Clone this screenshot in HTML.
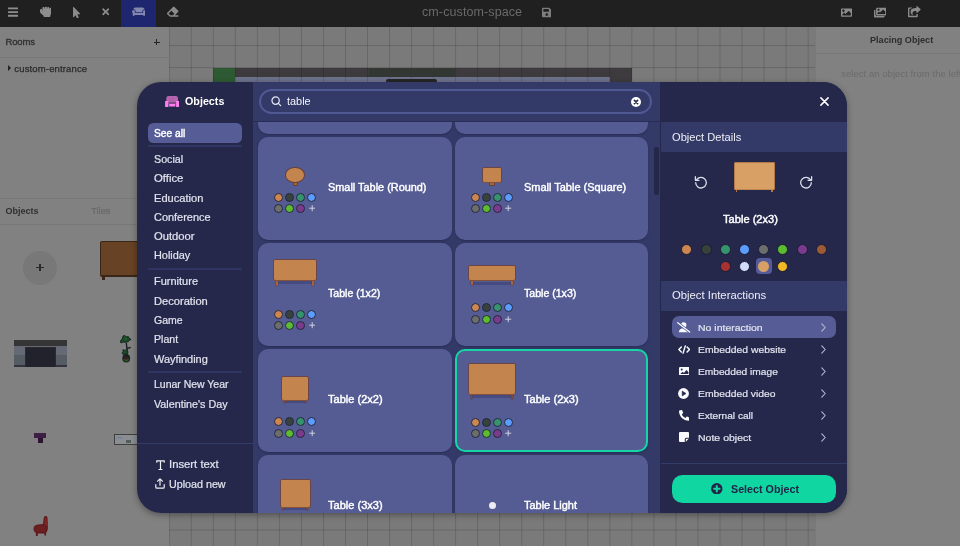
<!DOCTYPE html>
<html>
<head>
<meta charset="utf-8">
<title>Mapmaker</title>
<style>
*{box-sizing:border-box;margin:0;padding:0}
html,body{width:960px;height:546px;overflow:hidden;background:#808080;font-family:"Liberation Sans",sans-serif;}
.abs{position:absolute}
#stage{position:absolute;left:0;top:0;width:960px;height:546px;overflow:hidden;background:#7a7a7a;will-change:transform}
/* grid */
#grid{position:absolute;left:169px;top:27px;width:646px;height:519px}
#topbar{position:absolute;left:0;top:0;width:960px;height:27px;background:#202020}
#leftp{position:absolute;left:0;top:27px;width:169px;height:519px;background:#818181}
#rightp{position:absolute;left:815.5px;top:27px;width:144.5px;height:519px;background:#818181}
.t{position:absolute;white-space:nowrap;line-height:1}
.hl{position:absolute;height:1px;background:#777}
/* modal */
#modal{position:absolute;left:137px;top:82px;width:710px;height:431px;border-radius:24px;background:#25284b;overflow:hidden;}
#mshadow{position:absolute;left:137px;top:82px;width:710px;height:431px;border-radius:24px;box-shadow:0 2px 6px rgba(0,0,0,.35)}
#center{position:absolute;left:115.600px;top:0;width:407px;height:431px;background:#333a68}
.card{position:absolute;width:194px;height:103px;border-radius:10px;background:#555c93;box-shadow:0 1px 1.5px rgba(30,34,70,.5)}
.card.sel{border:2px solid #14d6a6}
.dot{position:absolute;width:9px;height:9px;border-radius:50%;border:.9px solid #25283f}
.plus{position:absolute;color:#e6e7f2;font-size:11px;line-height:9px;width:9px;text-align:center}
.lbl{position:absolute;color:#fff;font-weight:normal;-webkit-text-stroke:.4px #fff;font-size:10.300px;white-space:nowrap;line-height:1}
.mi{position:absolute;left:16.5px;color:#e2e3ee;-webkit-text-stroke:.2px #e2e3ee;font-size:10.200px;white-space:nowrap;line-height:1}
.sdiv{position:absolute;left:11px;width:94px;height:2px;background:#2f3663;border-radius:1px}
.band{position:absolute;left:1.300px;width:187px;height:30px;background:#333a68}
.ri{position:absolute;left:38.3px;color:#e2e3ee;-webkit-text-stroke:.2px #e2e3ee;font-size:9.700px;white-space:nowrap;line-height:1}
</style>
</head>
<body>
<div id="stage">
 <div id="map">
  <div class="abs" style="left:213px;top:68px;width:22px;height:20px;background:#2d5a32"></div>
  <div class="abs" style="left:235px;top:68px;width:397px;height:8.500px;background:#3d3b3e"></div>
  <div class="abs" style="left:235px;top:76.500px;width:375px;height:10px;background:#6c718a"></div>
  <div class="abs" style="left:610px;top:68px;width:22px;height:20px;background:#3d3b3e"></div>
 </div>
 <svg id="grid" width="646" height="519" viewBox="0 0 646 519"><defs><pattern id="gp" width="22.030" height="22.020" patternUnits="userSpaceOnUse" x="-.25" y="18.050"><rect x="0" y="0" width="1" height="22.020" fill="#000" fill-opacity=".15"/><rect x="0" y="0" width="22.030" height="1" fill="#000" fill-opacity=".15"/></pattern></defs><rect width="646" height="519" fill="url(#gp)"/></svg>
 <div id="map2">
  <div class="abs" style="left:368.500px;top:68px;width:86.500px;height:8.500px;background:#333734"></div>
  <div class="abs" style="left:386px;top:78.800px;width:51px;height:8px;background:#252525;border-radius:2px 2px 0 0"></div>
 </div>
 <div id="topbar">
  <svg class="abs" style="left:8.100px;top:6.800px;width:10.100px;height:10.100px" viewBox="0 0 448 448" fill="#8d8d8d"><rect x="0" y="20" width="448" height="80" rx="16"/><rect x="0" y="184" width="448" height="80" rx="16"/><rect x="0" y="348" width="448" height="80" rx="16"/></svg>
  <svg class="abs" style="left:39.500px;top:6px;width:11.700px;height:11.700px" viewBox="0 0 512 512" fill="#8d8d8d"><path d="M464.800 80c-26.900-.400-48.800 21.200-48.800 48h-8V96.800c0-26.300-20.900-48.300-47.200-48.800-26.900-.400-48.800 21.200-48.800 48v32h-8V80.800c0-26.300-20.900-48.300-47.200-48.800-26.900-.400-48.800 21.200-48.800 48v48h-8V96.800c0-26.300-20.900-48.300-47.200-48.800-26.900-.400-48.800 21.200-48.800 48v136l-8-7.100v-48.100c0-26.300-20.900-48.300-47.200-48.800C21.900 127.600 0 149.200 0 176v66.400c0 27.400 11.700 53.500 32.200 71.800l111.700 99.300c10.200 9.100 16.100 22.200 16.100 35.900v6.700c0 13.300 10.700 24 24 24h240c13.300 0 24-10.700 24-24v-2.900c0-12.800 2.600-25.500 7.500-37.300l49-116.300c5-11.800 7.500-24.500 7.500-37.300V128.800c0-26.300-20.900-48.400-47.200-48.800z"/></svg>
  <svg class="abs" style="left:72.7px;top:6.5px;width:7.2px;height:11.4px" viewBox="0 0 320 512" fill="#8b8b8b"><path d="M302.189 329.126H196.105l55.831 135.993c3.889 9.428-.555 19.999-9.444 23.999l-49.165 21.427c-9.165 4-19.443-.571-23.332-9.714l-53.053-129.136-86.664 89.138C18.729 472.710 0 463.554 0 447.977V18.299C0 1.899 19.921-6.096 30.277 5.443l284.412 292.542c11.472 11.179 3.007 31.141-12.500 31.141z"/></svg>
  <svg class="abs" style="left:101.800px;top:8.400px;width:7.500px;height:7.500px" viewBox="0 68 352 376" fill="#8b8b8b"><path d="M242.720 256l100.070-100.070c12.280-12.280 12.280-32.190 0-44.480l-22.240-22.240c-12.280-12.280-32.190-12.280-44.480 0L176 189.280 75.930 89.210c-12.280-12.280-32.190-12.280-44.480 0L9.210 111.450c-12.280 12.280-12.280 32.190 0 44.480L109.280 256 9.210 356.070c-12.280 12.280-12.280 32.190 0 44.480l22.240 22.240c12.280 12.280 32.200 12.280 44.480 0L176 322.720l100.070 100.070c12.280 12.280 32.200 12.280 44.480 0l22.240-22.240c12.280-12.280 12.280-32.190 0-44.480L242.720 256z"/></svg>
  <div class="abs" style="left:120.800px;top:0;width:35.700px;height:27px;background:#1f2670"></div>
  <svg class="abs" style="left:131.500px;top:6.200px;width:13.900px;height:11.100px" viewBox="0 0 640 512" fill="#8287ad"><path d="M160 224v64h320v-64c0-35.300 28.700-64 64-64h32c0-53-43-96-96-96H160c-53 0-96 43-96 96h32c35.300 0 64 28.700 64 64zm416-32h-32c-17.700 0-32 14.300-32 32v96H128v-96c0-17.700-14.300-32-32-32H64c-35.300 0-64 28.700-64 64 0 23.600 13 44 32 55.100V432c0 8.800 7.200 16 16 16h64c8.800 0 16-7.200 16-16v-16h384v16c0 8.800 7.200 16 16 16h64c8.800 0 16-7.200 16-16V311.100c19-11.100 32-31.500 32-55.100 0-35.300-28.700-64-64-64z"/></svg>
  <svg class="abs" style="left:167.200px;top:6.100px;width:11.400px;height:11.400px" viewBox="0 0 512 512" fill="#8b8b8b"><path d="M497.941 273.941c18.745-18.745 18.745-49.137 0-67.882l-160-160c-18.745-18.745-49.136-18.746-67.883 0l-256 256c-18.745 18.745-18.745 49.137 0 67.882l96 96A48.004 48.004 0 0 0 144 480h356c6.627 0 12-5.373 12-12v-40c0-6.627-5.373-12-12-12H355.883l142.058-142.059zm-302.627-62.627l137.373 137.373L265.373 416H150.628l-80-80 124.686-124.686z"/></svg>
  <div class="t" id="ttl" style="left:422px;top:5.500px;font-size:12.500px;color:#6a6a6a;letter-spacing:.1px">cm-custom-space</div>
  <svg class="abs" style="left:541.600px;top:6.800px;width:9.600px;height:11px" viewBox="0 0 448 512" fill="#7e7e7e"><path d="M433.941 129.941l-83.882-83.882A48 48 0 0 0 316.118 32H48C21.490 32 0 53.490 0 80v352c0 26.510 21.490 48 48 48h352c26.510 0 48-21.490 48-48V163.882a48 48 0 0 0-14.059-33.941zM224 416c-35.346 0-64-28.654-64-64 0-35.346 28.654-64 64-64s64 28.654 64 64c0 35.346-28.654 64-64 64zm96-304.520V212c0 6.627-5.373 12-12 12H76c-6.627 0-12-5.373-12-12V108c0-6.627 5.373-12 12-12h228.520c3.183 0 6.235 1.264 8.485 3.515l3.480 3.480A11.996 11.996 0 0 1 320 111.480z"/></svg>
  <svg class="abs" style="left:841px;top:6.800px;width:11.200px;height:11.200px" viewBox="0 0 512 512" fill="#8b8b8b"><path d="M464 448H48c-26.510 0-48-21.490-48-48V112c0-26.510 21.490-48 48-48h416c26.510 0 48 21.490 48 48v288c0 26.510-21.490 48-48 48zM112 120c-30.928 0-56 25.072-56 56s25.072 56 56 56 56-25.072 56-56-25.072-56-56-56zM64 384h384V272l-87.515-87.515c-4.686-4.686-12.284-4.686-16.971 0L208 320l-55.515-55.515c-4.686-4.686-12.284-4.686-16.971 0L64 336v48z"/></svg>
  <svg class="abs" style="left:873.800px;top:6.600px;width:12.600px;height:11.200px" viewBox="0 0 576 512" fill="#8b8b8b"><path d="M480 416v16c0 26.510-21.490 48-48 48H48c-26.510 0-48-21.490-48-48V176c0-26.510 21.490-48 48-48h16v208c0 44.112 35.888 80 80 80h336zm96-80V80c0-26.510-21.490-48-48-48H144c-26.510 0-48 21.490-48 48v256c0 26.510 21.490 48 48 48h384c26.510 0 48-21.490 48-48zM256 128c0 26.510-21.490 48-48 48s-48-21.490-48-48 21.490-48 48-48 48 21.490 48 48zm-96 144l55.515-55.515c4.686-4.686 12.284-4.686 16.971 0L272 256l135.515-135.515c4.686-4.686 12.284-4.686 16.971 0L512 208v112H160v-48z"/></svg>
  <svg class="abs" style="left:908.400px;top:6.400px;width:12.600px;height:11.200px" viewBox="0 0 576 512" fill="#8b8b8b"><path d="M568.482 177.448L424.479 313.433C409.300 327.768 384 317.140 384 295.985v-71.963c-144.575.970-205.566 35.113-164.775 171.353 4.483 14.973-12.846 26.567-25.006 17.330C155.252 383.105 120 326.488 120 269.339c0-143.937 117.599-172.500 264-173.312V24.012c0-21.174 25.317-31.768 40.479-17.448l144.003 135.988c10.020 9.463 10.028 25.425 0 34.896zM384 379.128V448H64V128h50.916a11.990 11.990 0 0 0 8.648-3.693c14.953-15.568 32.237-27.890 51.014-37.676C185.708 80.830 181.584 64 169.033 64H48C21.490 64 0 85.490 0 112v352c0 26.510 21.490 48 48 48h352c26.510 0 48-21.490 48-48v-88.806c0-8.288-8.197-14.066-16.011-11.302a71.830 71.830 0 0 1-34.189 3.377c-7.270-1.046-13.800 4.514-13.800 11.859z"/></svg>
 </div>
 <div id="leftp">
  <div class="t" id="rooms" style="left:5.500px;top:10px;font-size:9.500px;color:#2f2f2f;-webkit-text-stroke:.3px #2f2f2f;letter-spacing:-.15px">Rooms</div>
  <div class="abs" style="left:153.600px;top:14.500px;width:6.200px;height:1.300px;background:#242424"></div><div class="abs" style="left:156.050px;top:12.050px;width:1.300px;height:6.200px;background:#242424"></div>
  <div class="hl" style="left:0;top:30px;width:169px"></div>
  <div class="abs" style="left:8.200px;top:38.100px;width:0;height:0;border-left:3.800px solid #222;border-top:3.200px solid transparent;border-bottom:3.200px solid transparent"></div>
  <div class="t" id="cent" style="left:14.300px;top:36.800px;font-size:9.500px;color:#2b2b2b;-webkit-text-stroke:.25px #2b2b2b;letter-spacing:.15px">custom-entrance</div>
  <div class="hl" style="left:0;top:171px;width:169px"></div>
  <div class="t" id="lobj" style="left:5.600px;top:180px;font-size:9px;font-weight:bold;color:#2f2f2f;letter-spacing:0">Objects</div>
  <div class="t" id="ltil" style="left:91.300px;top:180px;font-size:9.200px;color:#686868;-webkit-text-stroke:.2px #686868">Tiles</div>
  <div class="hl" style="left:0;top:197px;width:169px"></div>
  <div class="abs" style="left:23px;top:223.500px;width:34px;height:34px;border-radius:50%;background:#787878"></div>
  <div class="abs" style="left:36.400px;top:240.100px;width:7.200px;height:1.200px;background:#2a2a2a"></div><div class="abs" style="left:39.400px;top:237.100px;width:1.200px;height:7.200px;background:#2a2a2a"></div>
  <!-- brown table -->
  <div class="abs" style="left:102px;top:246px;width:2.500px;height:7px;background:#3d2414"></div>
  <div class="abs" style="left:99.500px;top:214px;width:45px;height:35.500px;background:#674225;border:1px solid #3a2616;border-radius:2px;border-bottom-width:2px"></div>
  <!-- door -->
  <div class="abs" style="left:13.700px;top:312.800px;width:53.300px;height:27px;background:#656976"></div>
  <div class="abs" style="left:13.700px;top:312.800px;width:53.300px;height:6px;background:#353535"></div>
  <div class="abs" style="left:13.700px;top:327.500px;width:53.300px;height:10px;background:#565c63"></div>
  <div class="abs" style="left:13.700px;top:337.800px;width:53.300px;height:2px;background:#35343d"></div>
  <div class="abs" style="left:25px;top:319.500px;width:30.600px;height:20.300px;background:#22222c;border:1.500px solid #2b2b2b;border-bottom:none"></div>
  <!-- plant -->
  <svg class="abs" style="left:120px;top:307.500px;width:12px;height:28px" viewBox="0 0 12 28"><ellipse cx="6.200" cy="23.200" rx="3.900" ry="4.300" fill="#1a2420"/><ellipse cx="6.200" cy="24.600" rx="2.600" ry="1.900" fill="#245426"/><ellipse cx="6.200" cy="22.900" rx="2.400" ry="1.700" fill="#3a1c26"/><path d="M6.300 8L7.100 14.500 6.400 22" stroke="#1a1e22" stroke-width="1.400" fill="none"/><path d="M6.600 12.600l4.700-.9-1.100 1.700-3.600.7z" fill="#1b2922"/><path d="M2.900 14.600l2 .9 1.600-1.100 1.600 2.600-.9 2.100-4.200.3-1-1.500 1.100-1.500z" fill="#1a4a26" stroke="#14201a" stroke-width=".8"/><path d="M.7 5.400l1.600-1.500.9-3 1.600-.5 1.500 1.500 2-.3 1.200 2 1.600.8-1.900.9-1 1.500-3 .5-2-.3-2 .8-1.500-1.200z" fill="#1a4c27" stroke="#131d18" stroke-width=".9"/><path d="M3.500 3.200l2-.8 2 1.400-1.800 1.600z" fill="#1f5c2c"/></svg>
  <!-- purple -->
  <div class="abs" style="left:34.200px;top:406px;width:12px;height:5px;background:#3d1f45"></div>
  <div class="abs" style="left:37.600px;top:410.500px;width:5.200px;height:5px;background:#2d1433"></div>
  <!-- whiteboard -->
  <div class="abs" style="left:113.600px;top:407.300px;width:30px;height:11px;background:#8a8e92;border:1px solid #3f3f3f"></div>
  <div class="abs" style="left:116px;top:410px;width:7px;height:5px;border-top:1.500px solid #6c78a0;border-radius:50%"></div>
  <div class="abs" style="left:126px;top:412.500px;width:5px;height:3px;background:#555d5c"></div>
  <!-- chair -->
  <svg class="abs" style="left:32.500px;top:488px;width:16px;height:22px" viewBox="0 0 16 22"><path d="M10.700 3c.500-2.600 3.600-2.600 3.800 0l.400 9.500c0 2.500-.800 4.500-1.800 5.200v2.800h-1.700v-2H4.800v2.500H2.900v-3C1 17 .4 14.800.6 13c.300-2.200 2.300-3.200 4.800-3.400l4.600-.5z" fill="#5e1a1c"/><path d="M11.500 3.200c.300-1.500 2.100-1.500 2.300 0l.300 9c-.700-1.600-2.100-2.200-3-2.300z" fill="#7a2426"/><path d="M1.500 13c.400-1.600 2-2.300 4-2.400l4.600-.4c1.600.3 2.700 1.400 3 3 .200 1.700-.300 3-1 3.700H3.200c-1-.500-2-2-1.700-3.900z" fill="#6c1f21"/></svg>
 </div>
 <div id="rightp">
  <div class="t" id="plo" style="left:54.500px;top:9px;font-size:9.100px;font-weight:bold;color:#2d2d2d;letter-spacing:0">Placing Object</div>
  <div class="hl" style="left:0;top:25.500px;width:144px"></div>
  <div class="t" id="sel" style="left:25.600px;top:42.200px;font-size:9.500px;color:#6b6b6b;letter-spacing:.05px">select an object from the left</div>
 </div>
 <div id="mshadow"></div>
 <div id="modal">
<div id="side">
<svg class="abs" style="left:27.7px;top:13.7px;width:14.4px;height:11.4px" viewBox="0 0 14.4 11.4"><rect x="1.3" y=".1" width="11.7" height="6.5" rx="2.200" fill="#b564b0"/><g fill="#8d4a8c"><circle cx="5.100" cy="2.500" r=".45"/><circle cx="8" cy="2.500" r=".45"/><circle cx="5.100" cy="4.300" r=".45"/><circle cx="8" cy="4.300" r=".45"/></g><rect x="3.300" y="6.300" width="7.900" height="2.200" fill="#8e4b8c"/><rect x=".1" y="5" width="3.300" height="6.300" rx=".5" fill="#ff7eee"/><rect x="11.100" y="5" width="3.200" height="6.300" rx=".5" fill="#ff7eee"/><rect x="4.200" y="8.100" width="6.200" height="2.500" rx=".3" fill="#ff7eee"/></svg>
<div class="t" id="sobj" style="left:47.8px;top:15.300px;font-size:10.100px;font-weight:bold;color:#fff;transform:scaleX(1.0640);transform-origin:left center;">Objects</div>
<div class="abs" style="left:11px;top:41.200px;width:94px;height:19.400px;border-radius:5.500px;background:#555c96"></div>
<div class="t" id="seeall" style="left:16.6px;top:46.900px;font-size:10.200px;-webkit-text-stroke:.4px #fff;color:#fff;transform:scaleX(1.0046);transform-origin:left center;">See all</div>
<div class="sdiv" style="top:63.1px"></div>
<div class="sdiv" style="top:186.0px"></div>
<div class="sdiv" style="top:288.8px"></div>
<div class="abs" style="left:0;top:360.5px;width:116px;height:1.5px;background:#333b6b"></div>
<div class="mi" id="mi0" style="top:72.9px;transform:scaleX(1.0523);transform-origin:left center;">Social</div>
<div class="mi" id="mi1" style="top:92.3px;transform:scaleX(1.1121);transform-origin:left center;">Office</div>
<div class="mi" id="mi2" style="top:111.5px;transform:scaleX(1.0880);transform-origin:left center;">Education</div>
<div class="mi" id="mi3" style="top:130.8px;transform:scaleX(1.0727);transform-origin:left center;">Conference</div>
<div class="mi" id="mi4" style="top:150.1px;transform:scaleX(1.1002);transform-origin:left center;">Outdoor</div>
<div class="mi" id="mi5" style="top:169.4px;transform:scaleX(1.0681);transform-origin:left center;">Holiday</div>
<div class="mi" id="mi6" style="top:195.2px;transform:scaleX(1.0793);transform-origin:left center;">Furniture</div>
<div class="mi" id="mi7" style="top:214.5px;transform:scaleX(1.0917);transform-origin:left center;">Decoration</div>
<div class="mi" id="mi8" style="top:233.9px;transform:scaleX(1.0306);transform-origin:left center;">Game</div>
<div class="mi" id="mi9" style="top:253.2px;transform:scaleX(1.0373);transform-origin:left center;">Plant</div>
<div class="mi" id="mi10" style="top:272.5px;transform:scaleX(1.0753);transform-origin:left center;">Wayfinding</div>
<div class="mi" id="mi11" style="top:298.4px;transform:scaleX(1.0276);transform-origin:left center;">Lunar New Year</div>
<div class="mi" id="mi12" style="top:317.8px;transform:scaleX(1.0557);transform-origin:left center;">Valentine's Day</div>
<svg class="abs" style="left:19px;top:377.5px;width:9px;height:10.5px" viewBox="0 0 9 10.5" fill="none" stroke="#f0f0f7" stroke-width="1.2" stroke-linecap="round"><path d="M.8 2.2V.8h7.4v1.400M4.5.8v8.900M3 9.700h3"/></svg>
<div class="mi" id="mins" style="left:31.700px;top:378.100px;transform:scaleX(1.1088);transform-origin:left center;">Insert text</div>
<svg class="abs" style="left:17.700px;top:396px;width:10px;height:11px" viewBox="0 0 10 11" fill="none" stroke="#f0f0f7" stroke-width="1.2" stroke-linecap="round" stroke-linejoin="round"><path d="M5 7.200V1M2.600 3.200L5 .8l2.400 2.400M.8 6.500v2.700c0 .6.400 1 1 1h6.400c.6 0 1-.4 1-1V6.500"/></svg>
<div class="mi" id="mupl" style="left:31.700px;top:397.600px;transform:scaleX(1.0518);transform-origin:left center;">Upload new</div>
</div>
<div id="center">
<div class="card" style="left:5.4px;top:-51.0px;width:194.3px"></div>
<div class="card" style="left:202.2px;top:-51.0px;width:193.4px"></div>
<div class="card" style="left:5.4px;top:55.1px;width:194.3px"></div>
<div class="lbl" id="c10" style="left:75.3px;top:101.2px;transform:scaleX(1.0579);transform-origin:left center;">Small Table (Round)</div>
<div class="card" style="left:202.2px;top:55.1px;width:193.4px"></div>
<div class="lbl" id="c11" style="left:271.6px;top:101.2px;transform:scaleX(1.0649);transform-origin:left center;">Small Table (Square)</div>
<div class="card" style="left:5.4px;top:161.2px;width:194.3px"></div>
<div class="lbl" id="c20" style="left:75.3px;top:206.5px;transform:scaleX(1.0267);transform-origin:left center;">Table (1x2)</div>
<div class="card" style="left:202.2px;top:161.2px;width:193.4px"></div>
<div class="lbl" id="c21" style="left:271.6px;top:206.5px;transform:scaleX(1.0267);transform-origin:left center;">Table (1x3)</div>
<div class="card" style="left:5.4px;top:267.3px;width:194.3px"></div>
<div class="lbl" id="c30" style="left:75.3px;top:312.6px;transform:scaleX(1.0719);transform-origin:left center;">Table (2x2)</div>
<div class="card sel" style="left:202.2px;top:267.3px;width:193.4px"></div>
<div class="lbl" id="c31" style="left:271.6px;top:312.6px;transform:scaleX(1.0719);transform-origin:left center;">Table (2x3)</div>
<div class="card" style="left:5.4px;top:373.4px;width:194.3px"></div>
<div class="lbl" id="c40" style="left:75.3px;top:418.7px;transform:scaleX(1.0719);transform-origin:left center;">Table (3x3)</div>
<div class="card" style="left:202.2px;top:373.4px;width:193.4px"></div>
<div class="lbl" id="c41" style="left:271.6px;top:418.7px;transform:scaleX(1.0640);transform-origin:left center;">Table Light</div>
<div class="abs" style="left:40.1px;top:99.6px;width:5px;height:4px;background:#a9643a;border:.7px solid #63403c;border-radius:1px"></div><div class="abs" style="left:32.9px;top:85.0px;width:19.4px;height:15.6px;background:#c4844e;border:.8px solid #63403c;border-radius:50%"></div>
<div class="dot" style="left:21.5px;top:111.0px;background:#cc8750"></div><div class="dot" style="left:32.6px;top:111.0px;background:#37423c"></div><div class="dot" style="left:43.6px;top:111.0px;background:#35946e"></div><div class="dot" style="left:54.7px;top:111.0px;background:#5c9cfc"></div><div class="dot" style="left:21.5px;top:122.0px;background:#6c6e6c"></div><div class="dot" style="left:32.6px;top:122.0px;background:#5cbc30"></div><div class="dot" style="left:43.6px;top:122.0px;background:#7b3b8d"></div><svg class="abs" style="left:56.0px;top:123.3px;width:6.400px;height:6.400px" viewBox="0 0 6.400 6.400"><path d="M3.200 .2v6M.2 3.200h6" stroke="#d6d7e6" stroke-width=".95" fill="none"/></svg><div class="abs" style="left:236.4px;top:100.2px;width:6.5px;height:4px;background:#a9643a;border:.7px solid #63403c;border-radius:1px"></div><div class="abs" style="left:229.9px;top:85.0px;width:19.3px;height:15.8px;background:#c4844e;border:.75px solid #6a4548;border-bottom:1.100px solid #83503c;border-radius:2.400px"></div><div class="dot" style="left:218.3px;top:111.0px;background:#cc8750"></div><div class="dot" style="left:229.4px;top:111.0px;background:#37423c"></div><div class="dot" style="left:240.4px;top:111.0px;background:#35946e"></div><div class="dot" style="left:251.5px;top:111.0px;background:#5c9cfc"></div><div class="dot" style="left:218.3px;top:122.0px;background:#6c6e6c"></div><div class="dot" style="left:229.4px;top:122.0px;background:#5cbc30"></div><div class="dot" style="left:240.4px;top:122.0px;background:#7b3b8d"></div><svg class="abs" style="left:252.8px;top:123.3px;width:6.400px;height:6.400px" viewBox="0 0 6.400 6.400"><path d="M3.200 .2v6M.2 3.200h6" stroke="#d6d7e6" stroke-width=".95" fill="none"/></svg><div class="abs" style="left:24.7px;top:199.3px;width:35.8px;height:3.2px;background:rgba(45,48,100,.38)"></div><div class="abs" style="left:23.4px;top:198.3px;width:2.3px;height:6.0px;background:#a9633a;box-shadow:0 0 0 .5px rgba(90,55,60,.8);border-radius:0 0 1.200px 1.200px"></div><div class="abs" style="left:59.5px;top:198.3px;width:2.3px;height:6.0px;background:#a9633a;box-shadow:0 0 0 .5px rgba(90,55,60,.8);border-radius:0 0 1.200px 1.200px"></div><div class="abs" style="left:20.7px;top:177.0px;width:43.8px;height:22.3px;background:#c4844e;border:.75px solid #6a4548;border-bottom:1.100px solid #83503c;border-radius:2.400px"></div><div class="dot" style="left:21.5px;top:228.0px;background:#cc8750"></div><div class="dot" style="left:32.6px;top:228.0px;background:#37423c"></div><div class="dot" style="left:43.6px;top:228.0px;background:#35946e"></div><div class="dot" style="left:54.7px;top:228.0px;background:#5c9cfc"></div><div class="dot" style="left:21.5px;top:239.0px;background:#6c6e6c"></div><div class="dot" style="left:32.6px;top:239.0px;background:#5cbc30"></div><div class="dot" style="left:43.6px;top:239.0px;background:#7b3b8d"></div><svg class="abs" style="left:56.0px;top:240.3px;width:6.400px;height:6.400px" viewBox="0 0 6.400 6.400"><path d="M3.200 .2v6M.2 3.200h6" stroke="#d6d7e6" stroke-width=".95" fill="none"/></svg><div class="abs" style="left:219.5px;top:199.5px;width:39.8px;height:3.2px;background:rgba(45,48,100,.38)"></div><div class="abs" style="left:218.2px;top:198.5px;width:2.0px;height:4.2px;background:#a9633a;box-shadow:0 0 0 .5px rgba(90,55,60,.8);border-radius:0 0 1.200px 1.200px"></div><div class="abs" style="left:258.6px;top:198.5px;width:2.0px;height:4.2px;background:#a9633a;box-shadow:0 0 0 .5px rgba(90,55,60,.8);border-radius:0 0 1.200px 1.200px"></div><div class="abs" style="left:215.5px;top:183.1px;width:47.8px;height:16.4px;background:#c4844e;border:.75px solid #6a4548;border-bottom:1.100px solid #83503c;border-radius:2.400px"></div><div class="dot" style="left:218.3px;top:221.0px;background:#cc8750"></div><div class="dot" style="left:229.4px;top:221.0px;background:#37423c"></div><div class="dot" style="left:240.4px;top:221.0px;background:#35946e"></div><div class="dot" style="left:251.5px;top:221.0px;background:#5c9cfc"></div><div class="dot" style="left:218.3px;top:233.0px;background:#6c6e6c"></div><div class="dot" style="left:229.4px;top:233.0px;background:#5cbc30"></div><div class="dot" style="left:240.4px;top:233.0px;background:#7b3b8d"></div><svg class="abs" style="left:252.8px;top:234.3px;width:6.400px;height:6.400px" viewBox="0 0 6.400 6.400"><path d="M3.200 .2v6M.2 3.200h6" stroke="#d6d7e6" stroke-width=".95" fill="none"/></svg><div class="abs" style="left:32.8px;top:318.6px;width:19.5px;height:2.4px;background:rgba(45,48,100,.38)"></div><div class="abs" style="left:31.5px;top:317.6px;width:1.6px;height:3.4px;background:#7a4a38;box-shadow:0 0 0 .5px rgba(90,55,60,.8);border-radius:0 0 1.200px 1.200px"></div><div class="abs" style="left:52.0px;top:317.6px;width:1.6px;height:3.4px;background:#7a4a38;box-shadow:0 0 0 .5px rgba(90,55,60,.8);border-radius:0 0 1.200px 1.200px"></div><div class="abs" style="left:28.8px;top:293.7px;width:27.5px;height:24.9px;background:#c4844e;border:.75px solid #6a4548;border-bottom:1.100px solid #83503c;border-radius:2.400px"></div><div class="dot" style="left:21.5px;top:335.0px;background:#cc8750"></div><div class="dot" style="left:32.6px;top:335.0px;background:#37423c"></div><div class="dot" style="left:43.6px;top:335.0px;background:#35946e"></div><div class="dot" style="left:54.7px;top:335.0px;background:#5c9cfc"></div><div class="dot" style="left:21.5px;top:347.0px;background:#6c6e6c"></div><div class="dot" style="left:32.6px;top:347.0px;background:#5cbc30"></div><div class="dot" style="left:43.6px;top:347.0px;background:#7b3b8d"></div><svg class="abs" style="left:56.0px;top:348.3px;width:6.400px;height:6.400px" viewBox="0 0 6.400 6.400"><path d="M3.200 .2v6M.2 3.200h6" stroke="#d6d7e6" stroke-width=".95" fill="none"/></svg><div class="abs" style="left:219.5px;top:313.3px;width:39.8px;height:3.2px;background:rgba(45,48,100,.38)"></div><div class="abs" style="left:218.2px;top:312.3px;width:1.7px;height:4.3px;background:#7a4a38;box-shadow:0 0 0 .5px rgba(90,55,60,.8);border-radius:0 0 1.200px 1.200px"></div><div class="abs" style="left:258.9px;top:312.3px;width:1.7px;height:4.3px;background:#7a4a38;box-shadow:0 0 0 .5px rgba(90,55,60,.8);border-radius:0 0 1.200px 1.200px"></div><div class="abs" style="left:215.5px;top:281.4px;width:47.8px;height:31.9px;background:#c4844e;border:.75px solid #6a4548;border-bottom:1.100px solid #83503c;border-radius:2.400px"></div><div class="dot" style="left:218.3px;top:336.0px;background:#cc8750"></div><div class="dot" style="left:229.4px;top:336.0px;background:#37423c"></div><div class="dot" style="left:240.4px;top:336.0px;background:#35946e"></div><div class="dot" style="left:251.5px;top:336.0px;background:#5c9cfc"></div><div class="dot" style="left:218.3px;top:347.0px;background:#6c6e6c"></div><div class="dot" style="left:229.4px;top:347.0px;background:#5cbc30"></div><div class="dot" style="left:240.4px;top:347.0px;background:#7b3b8d"></div><svg class="abs" style="left:252.8px;top:348.3px;width:6.400px;height:6.400px" viewBox="0 0 6.400 6.400"><path d="M3.200 .2v6M.2 3.200h6" stroke="#d6d7e6" stroke-width=".95" fill="none"/></svg><div class="abs" style="left:31.1px;top:426.2px;width:23.1px;height:2.3px;background:rgba(45,48,100,.38)"></div><div class="abs" style="left:29.8px;top:425.2px;width:1.6px;height:3.3px;background:#7a4a38;box-shadow:0 0 0 .5px rgba(90,55,60,.8);border-radius:0 0 1.200px 1.200px"></div><div class="abs" style="left:53.9px;top:425.2px;width:1.6px;height:3.3px;background:#7a4a38;box-shadow:0 0 0 .5px rgba(90,55,60,.8);border-radius:0 0 1.200px 1.200px"></div><div class="abs" style="left:27.1px;top:397.4px;width:31.1px;height:28.8px;background:#c4844e;border:.75px solid #6a4548;border-bottom:1.100px solid #83503c;border-radius:2.400px"></div><div class="abs" style="left:236.0px;top:420.0px;width:7.400px;height:7.400px;border-radius:50%;background:#ececf2"></div>
<div class="abs" style="left:0;top:0;width:407px;height:39px;background:#333a68"></div>
<div class="abs" style="left:0;top:39px;width:407px;height:1.2px;background:#282d55"></div>
<div class="abs" style="left:6.900px;top:6.800px;width:392.700px;height:25.200px;border:2px solid #515994;border-radius:12.600px"></div>
<svg class="abs" style="left:18.6px;top:14.2px;width:10.600px;height:10.600px" viewBox="0 0 11 11" fill="none" stroke="#e6e6f0" stroke-width="1.300" stroke-linecap="round"><circle cx="4.800" cy="4.800" r="3.800"/><path d="M7.700 7.700L10 10"/></svg>
<div class="t" id="q" style="left:34.2px;top:15.1px;font-size:10.200px;color:#f4f4fa;transform:scaleX(1.0682);transform-origin:left center;">table</div>
<svg class="abs" style="left:378.2px;top:14.5px;width:10px;height:10px" viewBox="0 0 10 10"><circle cx="5" cy="5" r="5" fill="#fff"/><path d="M3.400 3.400l3.200 3.200M6.600 3.400L3.400 6.600" stroke="#2a2e55" stroke-width="1.700" stroke-linecap="round"/></svg>
<div class="abs" style="left:401.500px;top:65px;width:4.700px;height:48px;border-radius:2.3px;background:#242748"></div>
</div>
<div id="right" class="abs" style="left:522.600px;top:0;width:187.400px;height:431px;background:#25284b">
<svg class="abs" style="left:160.9px;top:14.8px;width:9px;height:9px" viewBox="0 0 9 9"><path d="M.9.900l7.200 7.200M8.100.900L.9 8.100" stroke="#fff" stroke-width="1.500" stroke-linecap="round"/></svg>
<div class="band" style="top:40.300px;height:29.800px"></div>
<div class="t" id="od" style="left:12.200px;top:50.7px;font-size:10.200px;color:#eeeef6;transform:scaleX(1.0911);transform-origin:left center;">Object Details</div>
<div class="band" style="top:198.600px;height:30.200px"></div>
<div class="t" id="oi" style="left:12.200px;top:208.9px;font-size:10.200px;color:#eeeef6;transform:scaleX(1.1091);transform-origin:left center;">Object Interactions</div>
<div class="abs" style="left:76.4px;top:107.0px;width:1.400px;height:3.200px;background:#b9743f"></div><div class="abs" style="left:111.6px;top:107.0px;width:1.400px;height:3.200px;background:#b9743f"></div><div class="abs" style="left:74.4px;top:80.4px;width:40.700px;height:27.300px;background:#d9a066;border:.7px solid #b07a48;border-bottom:1.200px solid #c08850;border-radius:1.500px"></div>
<svg class="abs" style="left:34.8px;top:93.4px;width:14px;height:14px" viewBox="0 0 13 13" fill="none" stroke="#dfe0ea" stroke-width="1.200" stroke-linecap="round" stroke-linejoin="round"><path d="M2.300 4.600A4.900 4.900 0 1 1 1.600 7"/><path d="M1.300 1.600v3.300h3.300"/></svg>
<svg class="abs" style="left:139.6px;top:93.4px;width:14px;height:14px" viewBox="0 0 13 13" fill="none" stroke="#dfe0ea" stroke-width="1.200" stroke-linecap="round" stroke-linejoin="round"><path d="M10.700 4.600A4.900 4.900 0 1 0 11.400 7"/><path d="M11.700 1.600v3.300H8.400"/></svg>
<div class="t" id="nm" style="left:0;width:182.600px;text-align:center;top:133.0px;font-size:10.300px;-webkit-text-stroke:.4px #fff;color:#fff;"><span id="nms" style="display:inline-block;transform:scaleX(1.0758);transform-origin:center center;">Table (2x3)</span></div>
<div class="dot" style="left:21.8px;top:162.1px;width:11px;height:11px;border:.9px solid #1b1d36;background:#cc8750"></div><div class="dot" style="left:41.0px;top:162.1px;width:11px;height:11px;border:.9px solid #1b1d36;background:#37423c"></div><div class="dot" style="left:60.3px;top:162.1px;width:11px;height:11px;border:.9px solid #1b1d36;background:#35946e"></div><div class="dot" style="left:79.5px;top:162.1px;width:11px;height:11px;border:.9px solid #1b1d36;background:#5c9cfc"></div><div class="dot" style="left:98.7px;top:162.1px;width:11px;height:11px;border:.9px solid #1b1d36;background:#6c6e6c"></div><div class="dot" style="left:117.9px;top:162.1px;width:11px;height:11px;border:.9px solid #1b1d36;background:#5cbc30"></div><div class="dot" style="left:137.2px;top:162.1px;width:11px;height:11px;border:.9px solid #1b1d36;background:#7b3b8d"></div><div class="dot" style="left:156.4px;top:162.1px;width:11px;height:11px;border:.9px solid #1b1d36;background:#9a5b36"></div><div class="abs" style="left:96.3px;top:176.2px;width:16px;height:16px;border-radius:4px;background:#545c99"></div><div class="dot" style="left:60.3px;top:178.6px;width:11px;height:11px;border:.9px solid #1b1d36;background:#a83232"></div><div class="dot" style="left:79.5px;top:178.6px;width:11px;height:11px;border:.9px solid #1b1d36;background:#cfdcfc"></div><div class="dot" style="left:98.7px;top:178.6px;width:11px;height:11px;border:none;background:#d9a066"></div><div class="dot" style="left:117.9px;top:178.6px;width:11px;height:11px;border:.9px solid #1b1d36;background:#f2b824"></div>
<div class="abs" style="left:12.300px;top:234.3px;width:164.300px;height:21.600px;border-radius:7px;background:#555c96"></div>
<svg class="abs" style="left:17.6px;top:239.8px;width:13.400px;height:10.800px" viewBox="0 0 13.400 10.800"><circle cx="6.700" cy="3" r="2.700" fill="#fbfbff"/><path d="M1.900 10.300c0-2.700 2-4.100 4.800-4.100s4.800 1.400 4.800 4.100z" fill="#fbfbff"/><path d="M.5.500l12.400 9.800" stroke="#555c96" stroke-width="2.600"/><path d="M.7.700l12 9.400" stroke="#fbfbff" stroke-width="1.200" stroke-linecap="round"/></svg><div class="ri" id="ri0" style="top:241.1px;transform:scaleX(1.0823);transform-origin:left center;">No interaction</div><svg class="abs" style="left:161.3px;top:241.0px;width:5px;height:9px" viewBox="0 0 5 9" fill="none" stroke="#b9bbd6" stroke-width="1.100" stroke-linecap="round" stroke-linejoin="round"><path d="M.8.800L4.200 4.500.8 8.200"/></svg>
<svg class="abs" style="left:18.1px;top:262.7px;width:12.400px;height:9px" viewBox="0 0 12.400 9" fill="none" stroke="#fbfbff" stroke-width="1.450" stroke-linecap="round" stroke-linejoin="round"><path d="M3.300 2L.9 4.500l2.400 2.500M9.100 2l2.400 2.500L9.100 7M7.300.900L5.100 8.100"/></svg><div class="ri" id="ri1" style="top:263.1px;transform:scaleX(1.0691);transform-origin:left center;">Embedded website</div><svg class="abs" style="left:161.3px;top:263.0px;width:5px;height:9px" viewBox="0 0 5 9" fill="none" stroke="#b9bbd6" stroke-width="1.100" stroke-linecap="round" stroke-linejoin="round"><path d="M.8.800L4.200 4.500.8 8.200"/></svg>
<svg class="abs" style="left:19.3px;top:285.1px;width:10.600px;height:8.400px" viewBox="0 0 10.600 8.400"><rect x="0" y="0" width="10.600" height="8.400" rx="1.200" fill="#fbfbff"/><circle cx="2.700" cy="2.600" r="1" fill="#25284b"/><path d="M1.300 7l2.300-2.300 1.300 1.300 2.600-2.900 1.900 2V7z" fill="#25284b"/></svg><div class="ri" id="ri2" style="top:285.2px;transform:scaleX(1.0509);transform-origin:left center;">Embedded image</div><svg class="abs" style="left:161.3px;top:285.1px;width:5px;height:9px" viewBox="0 0 5 9" fill="none" stroke="#b9bbd6" stroke-width="1.100" stroke-linecap="round" stroke-linejoin="round"><path d="M.8.800L4.200 4.500.8 8.200"/></svg>
<svg class="abs" style="left:18.9px;top:305.8px;width:11px;height:11px" viewBox="0 0 11 11"><circle cx="5.500" cy="5.500" r="5.400" fill="#fbfbff"/><path d="M4.200 3.100l3.800 2.400-3.800 2.400z" fill="#25284b" stroke="#25284b" stroke-width=".6" stroke-linejoin="round"/></svg><div class="ri" id="ri3" style="top:307.2px;transform:scaleX(1.0671);transform-origin:left center;">Embedded video</div><svg class="abs" style="left:161.3px;top:307.1px;width:5px;height:9px" viewBox="0 0 5 9" fill="none" stroke="#b9bbd6" stroke-width="1.100" stroke-linecap="round" stroke-linejoin="round"><path d="M.8.800L4.200 4.500.8 8.200"/></svg>
<svg class="abs" style="left:19.1px;top:327.9px;width:10.800px;height:10.800px" viewBox="0 0 512 512"><path fill="#fbfbff" d="M493.400 24.600l-104-24c-11.300-2.600-22.900 3.300-27.500 13.900l-48 112c-4.200 9.800-1.400 21.300 6.900 28l60.600 49.600c-36 76.700-98.900 140.500-177.200 177.200l-49.600-60.600c-6.800-8.300-18.200-11.100-28-6.900l-112 48C3.900 366.500-2 378.100.6 389.400l24 104C27.100 504.200 36.700 512 48 512c256.100 0 464-207.500 464-464 0-11.200-7.700-20.900-18.600-23.400z" transform="translate(512 0) scale(-1 1)"/></svg><div class="ri" id="ri4" style="top:329.2px;transform:scaleX(1.0439);transform-origin:left center;">External call</div><svg class="abs" style="left:161.3px;top:329.1px;width:5px;height:9px" viewBox="0 0 5 9" fill="none" stroke="#b9bbd6" stroke-width="1.100" stroke-linecap="round" stroke-linejoin="round"><path d="M.8.800L4.200 4.500.8 8.200"/></svg>
<svg class="abs" style="left:19.8px;top:350.3px;width:10px;height:10px" viewBox="0 0 10 10"><path d="M1 0h8a1 1 0 0 1 1 1v5.500L6.500 10H1a1 1 0 0 1-1-1V1a1 1 0 0 1 1-1z" fill="#fbfbff"/><path d="M6.300 10V7.300a1 1 0 0 1 1-1H10" fill="none" stroke="#25284b" stroke-width="1.100"/></svg><div class="ri" id="ri5" style="top:351.2px;transform:scaleX(1.0854);transform-origin:left center;">Note object</div><svg class="abs" style="left:161.3px;top:351.1px;width:5px;height:9px" viewBox="0 0 5 9" fill="none" stroke="#b9bbd6" stroke-width="1.100" stroke-linecap="round" stroke-linejoin="round"><path d="M.8.800L4.200 4.500.8 8.200"/></svg>
<div class="abs" style="left:1.300px;top:380.8px;width:187px;height:1.300px;background:#333b6b"></div>
<div class="abs" style="left:12.600px;top:393.1px;width:163.900px;height:27.600px;border-radius:10.500px;background:#10d6a2"></div>
<svg class="abs" style="left:51.8px;top:400.9px;width:11.600px;height:11.600px" viewBox="0 0 11 11"><circle cx="5.500" cy="5.500" r="5.400" fill="#222548"/><path d="M5.500 2.900v5.200M2.900 5.500h5.200" stroke="#10d6a2" stroke-width="1.900" stroke-linecap="round"/></svg>
<div class="t" id="sb" style="left:71.1px;top:403.0px;font-size:10.300px;font-weight:bold;color:#222548;transform:scaleX(1.0421);transform-origin:left center;">Select Object</div>
</div>
</div>
</div>
</body>
</html>
